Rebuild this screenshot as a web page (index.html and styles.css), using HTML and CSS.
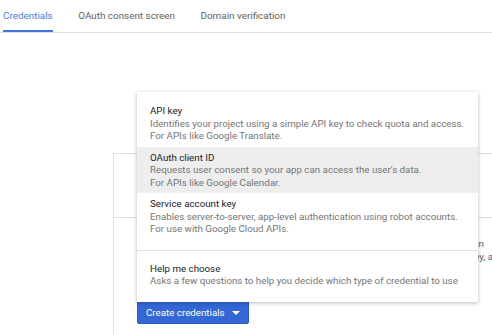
FILE: index.html
```html
<!DOCTYPE html>
<html>
<head>
<meta charset="utf-8">
<link rel="stylesheet" href="styles.css">
</head>
<body>
<div class="page">
  <nav class="tabs">
    <div class="tab active">Credentials</div>
    <div class="tab">OAuth consent screen</div>
    <div class="tab">Domain verification</div>
  </nav>
  <section class="card">
    <div class="card-head"></div>
    <div class="card-body">
      <div class="lines">
        <div class="line l1">You need credentials to access APIs. Enable the APIs you plan to use in</div>
        <div class="line l2">your project, then create credentials. Depending on the API, you need a key, a</div>
      </div>
      <button class="create-btn">Create credentials <span class="caret"></span></button>
    </div>
  </section>
  <div class="menu">
    <div class="item">
      <div class="item-title">API key</div>
      <div class="item-desc">Identifies your project using a simple API key to check quota and access.</div>
      <div class="item-desc">For APIs like Google Translate.</div>
    </div>
    <div class="item hover">
      <div class="item-title">OAuth client ID</div>
      <div class="item-desc">Requests user consent so your app can access the user's data.</div>
      <div class="item-desc">For APIs like Google Calendar.</div>
    </div>
    <div class="item">
      <div class="item-title">Service account key</div>
      <div class="item-desc">Enables server-to-server, app-level authentication using robot accounts.</div>
      <div class="item-desc">For use with Google Cloud APIs.</div>
    </div>
    <div class="divider"></div>
    <div class="item">
      <div class="item-title">Help me choose</div>
      <div class="item-desc">Asks a few questions to help you decide which type of credential to use</div>
    </div>
  </div>
</div>
</body>
</html>
```
FILE: styles.css
```css
html, body {
  margin: 0;
  padding: 0;
  background: #fff;
}
body {
  width: 492px;
  height: 335px;
  overflow: hidden;
  font-family: Roboto, "Liberation Sans", Arial, sans-serif;
  font-size: 9.75px;
  color: #212121;
}
.page {
  position: relative;
  width: 492px;
  height: 335px;
  overflow: hidden;
}
.tabs {
  display: flex;
  gap: 25.5px;
  padding-left: 3px;
  border-bottom: 1px solid #e0e0e0;
  height: 33px;
  box-sizing: border-box;
}
.tab {
  padding-top: 10px;
  line-height: 12px;
  font-size: 9.9px;
  color: #616161;
  box-sizing: border-box;
  height: 32px;
}
.tab.active {
  color: #4a7bd9;
  border-bottom: 2px solid #3f73d9;
}
.card {
  margin-top: 120px;
  margin-left: 113px;
  width: 379px;
  height: 181px;
  border: 1px solid #e0e0e0;
  border-right: none;
  border-bottom: none;
  box-sizing: border-box;
  overflow: hidden;
}
.card-head {
  height: 64px;
  border-bottom: 1px solid #e0e0e0;
  box-sizing: border-box;
}
.card-body {
  padding: 19px 0 0 23px;
}
.lines {
  width: 347px;
  color: #616161;
  line-height: 13px;
}
.line {
  white-space: nowrap;
  text-align: right;
}
.l2 {
  margin-right: -9px;
}
.create-btn {
  margin-top: 37px;
  display: flex;
  align-items: center;
  gap: 7px;
  height: 24px;
  padding: 0 8px;
  background: #3367d6;
  border: 1px solid #2a5bc9;
  border-radius: 2px;
  color: #fff;
  font-family: Roboto, "Liberation Sans", Arial, sans-serif;
  font-size: 9.75px;
  box-sizing: border-box;
}
.caret {
  width: 0;
  height: 0;
  border-left: 4px solid transparent;
  border-right: 4px solid transparent;
  border-top: 4px solid #fff;
  margin-top: 2px;
}
.menu {
  position: absolute;
  left: 137px;
  top: 92px;
  width: 341px;
  background: #fff;
  padding: 8px 0 10px;
  box-sizing: border-box;
  box-shadow: 0 1px 4px rgba(0, 0, 0, 0.28);
}
.item {
  padding: 5px 13px 4px;
  line-height: 12.5px;
}
.item.hover {
  background: #eeeeee;
}
.item-title {
  color: #212121;
}
.item-desc {
  color: #757575;
}
.divider {
  height: 1px;
  background: #e0e0e0;
  margin: 10px 0 7px;
}
```
